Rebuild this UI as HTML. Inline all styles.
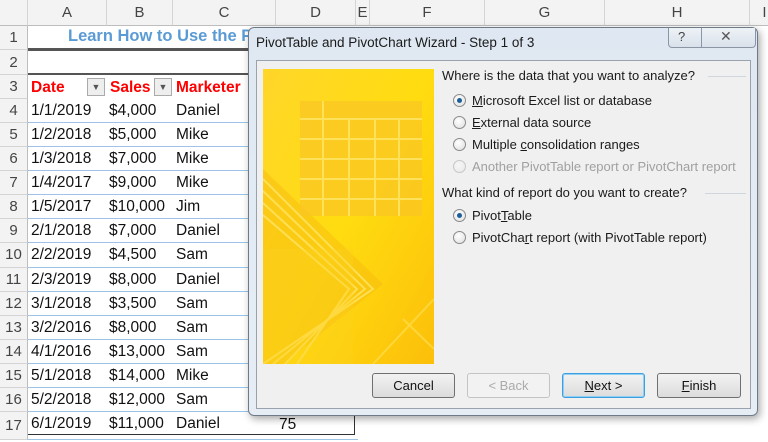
<!DOCTYPE html>
<html><head><meta charset="utf-8"><style>
*{margin:0;padding:0;box-sizing:border-box}
body{width:768px;height:442px;overflow:hidden;background:#fff;font-family:"Liberation Sans",sans-serif;position:relative}
.a{position:absolute}
.ch{top:0;height:26px;background:#f3f3f3;border-right:1px solid #d4d4d4;border-bottom:1px solid #bdbdbd;font-size:15px;color:#444;text-align:center;line-height:26px}
.rh{left:0;width:28px;background:#f3f3f3;border-right:1px solid #bdbdbd;border-bottom:1px solid #d4d4d4;font-size:15px;color:#444;text-align:center}
.c{font-size:15.5px;color:#111;white-space:nowrap}
.hl{left:28px;width:330px;height:1px;background:#9dc3e6}
.rad{width:13px;height:13px;border-radius:50%;border:1px solid #8a8a8a;background:radial-gradient(circle at 40% 35%,#fff,#ddd)}
.rad.on::after{content:"";position:absolute;left:3px;top:3px;width:5px;height:5px;border-radius:50%;background:#1d5f99}
.t{font-size:13px;color:#1a1a1a;white-space:nowrap}
.btn{top:373px;height:25px;border:1px solid #707070;border-radius:3px;background:linear-gradient(#f2f2f2,#dcdcdc);font-size:13px;text-align:center;line-height:23px;color:#111}
</style></head><body>
<div class="a ch" style="left:0;width:28px;background:#f3f3f3"></div>
<div class="a ch" style="left:28px;width:79px">A</div>
<div class="a ch" style="left:107px;width:66px">B</div>
<div class="a ch" style="left:173px;width:103px">C</div>
<div class="a ch" style="left:276px;width:80px">D</div>
<div class="a ch" style="left:356px;width:14px">E</div>
<div class="a ch" style="left:370px;width:115px">F</div>
<div class="a ch" style="left:485px;width:120px">G</div>
<div class="a ch" style="left:605px;width:145px">H</div>
<div class="a ch" style="left:750px;width:30px">I</div>

<div id="rows"></div>
<script>
var d=[["1/1/2019","$4,000","Daniel"],["1/2/2018","$5,000","Mike"],["1/3/2018","$7,000","Mike"],["1/4/2017","$9,000","Mike"],["1/5/2017","$10,000","Jim"],["2/1/2018","$7,000","Daniel"],["2/2/2019","$4,500","Sam"],["2/3/2019","$8,000","Daniel"],["3/1/2018","$3,500","Sam"],["3/2/2016","$8,000","Sam"],["4/1/2016","$13,000","Sam"],["5/1/2018","$14,000","Mike"],["5/2/2018","$12,000","Sam"],["6/1/2019","$11,000","Daniel"]];
var h="",tops=[26,50,75];for(var i=3;i<17;i++)tops.push(99+(i-3)*24.08);tops.push(440);
for(var r=0;r<17;r++){var t=tops[r],hh=tops[r+1]-t;h+='<div class="a rh" style="top:'+t+'px;height:'+hh+'px;line-height:'+hh+'px">'+(r+1)+'</div>';
if(r>=3){var x=d[r-3];h+='<div class="a c" style="left:31px;top:'+(t+3)+'px">'+x[0]+'</div><div class="a c" style="left:109px;top:'+(t+3)+'px">'+x[1]+'</div><div class="a c" style="left:176px;top:'+(t+3)+'px">'+x[2]+'</div><div class="a hl" style="top:'+(t+hh-1)+'px"></div>';}}
document.getElementById("rows").innerHTML=h;
</script>
<div class="a" style="left:28px;top:48px;width:330px;height:3px;background:#555"></div>
<div class="a" style="left:28px;top:73px;width:330px;height:2px;background:#555"></div>
<div class="a" style="left:68px;top:27px;font-size:16.5px;font-weight:bold;color:#5b9bd5;white-space:nowrap">Learn How to Use the P</div>
<div class="a c" style="left:31px;top:79px;color:#f00;font-weight:bold">Date</div>
<div class="a" style="left:87px;top:78px;width:18px;height:18px;border:1px solid #aaa;background:#eee;font-size:9px;color:#555;text-align:center;line-height:16px">▼</div>
<div class="a c" style="left:110px;top:79px;color:#f00;font-weight:bold">Sales</div>
<div class="a" style="left:154px;top:78px;width:18px;height:18px;border:1px solid #aaa;background:#eee;font-size:9px;color:#555;text-align:center;line-height:16px">▼</div>
<div class="a c" style="left:176px;top:79px;color:#f00;font-weight:bold">Marketer</div>
<div class="a c" style="left:279px;top:416px">75</div>
<div class="a" style="left:28px;top:434px;width:326px;height:1px;background:#333"></div>
<div class="a" style="left:354px;top:415px;width:1px;height:20px;background:#333"></div>

<!-- dialog -->
<div class="a" style="left:248px;top:27px;width:510px;height:389px;border:1px solid #6e7a88;border-radius:6px;background:linear-gradient(#dfe8f2,#e6edf5);box-shadow:2px 3px 8px rgba(0,0,0,.35)"></div>
<div class="a t" style="left:256px;top:35px;font-size:13.5px">PivotTable and PivotChart Wizard - Step 1 of 3</div>
<div class="a" style="left:668px;top:28px;width:88px;height:20px;border:1px solid #8a96a6;border-top:none;border-radius:0 0 4px 4px;background:linear-gradient(#eef2f7,#d9e1ea)"></div>
<div class="a" style="left:701px;top:28px;width:1px;height:20px;background:#8a96a6"></div>
<div class="a" style="left:678px;top:29px;font-size:13px;color:#444">?</div>
<div class="a" style="left:720px;top:28px;font-size:14px;color:#555">✕</div>
<div class="a" style="left:256px;top:60px;width:495px;height:349px;border:1px solid #9aa3ad;background:#f0f0f0"></div>
<svg class="a" style="left:263px;top:69px" width="171" height="295" viewBox="0 0 171 295">
<defs><linearGradient id="g" x1="0" y1="0" x2="1" y2="1"><stop offset="0" stop-color="#ffd62a"/><stop offset=".5" stop-color="#ffdc10"/><stop offset="1" stop-color="#fcbf0a"/></linearGradient></defs>
<rect width="171" height="295" fill="url(#g)"/>
<path d="M0 100L120 215L20 295H0Z" fill="#f7b90f" opacity=".45"/>
<rect x="37" y="32" width="122" height="115" fill="#f9c425" opacity=".7"/>
<g stroke="#ffe15a" stroke-width="2" fill="none">
<path d="M60 32V147M86 50V147M112 50V147M136 50V147M37 50H159M37 70H159M37 90H159M37 110H159M37 130H159"/>
<path d="M0 110L110 220L0 295M0 122L102 220L10 295M0 134L94 220L22 295M0 146L86 220L34 295" opacity=".9"/>
<path d="M110 295L171 230M140 250L171 280" opacity=".6"/>
</g>
<rect x="0" y="180" width="90" height="115" fill="#fcd020" opacity=".35"/>
</svg>
<div class="a t" style="left:442px;top:68px">Where is the data that you want to analyze?</div>
<div class="a" style="left:708px;top:76px;width:38px;height:1px;background:#d0d6dd"></div>
<div class="a rad on" style="left:453px;top:94px"></div><div class="a t" style="left:472px;top:93px"><u>M</u>icrosoft Excel list or database</div>
<div class="a rad" style="left:453px;top:116px"></div><div class="a t" style="left:472px;top:115px"><u>E</u>xternal data source</div>
<div class="a rad" style="left:453px;top:138px"></div><div class="a t" style="left:472px;top:137px">Multiple <u>c</u>onsolidation ranges</div>
<div class="a rad" style="left:453px;top:160px;opacity:.4"></div><div class="a t" style="left:472px;top:159px;color:#a0a0a0">Another PivotTable report or PivotChart report</div>
<div class="a t" style="left:442px;top:185px">What kind of report do you want to create?</div>
<div class="a" style="left:705px;top:193px;width:41px;height:1px;background:#d0d6dd"></div>
<div class="a rad on" style="left:453px;top:209px"></div><div class="a t" style="left:472px;top:208px">Pivot<u>T</u>able</div>
<div class="a rad" style="left:453px;top:231px"></div><div class="a t" style="left:472px;top:230px">PivotCha<u>r</u>t report (with PivotTable report)</div>
<div class="a btn" style="left:372px;width:83px">Cancel</div>
<div class="a btn" style="left:467px;width:83px;color:#aaa;border-color:#c4c4c4;background:#f2f2f2">&lt; Back</div>
<div class="a btn" style="left:562px;width:83px;border-color:#3c9ee0;box-shadow:inset 0 0 0 1px #8fd0f5"><u>N</u>ext &gt;</div>
<div class="a btn" style="left:657px;width:84px"><u>F</u>inish</div>
</body></html>
